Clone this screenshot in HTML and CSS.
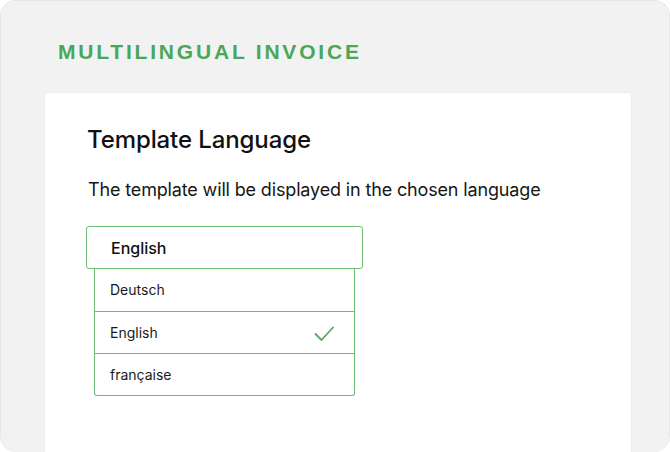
FILE: index.html
```html
<!DOCTYPE html>
<html>
<head>
<meta charset="utf-8">
<link rel="stylesheet" href="styles.css">
</head>
<body>
<div class="frame">
  <h1 class="eyebrow">MULTILINGUAL INVOICE</h1>
  <div class="panel">
    <h2 class="heading">Template Language</h2>
    <p class="desc">The template will be displayed in the chosen language</p>
    <div class="select">
      <div class="select-value">English</div>
      <ul class="menu">
        <li class="option">Deutsch</li>
        <li class="option selected">English
          <svg class="check" width="20" height="16" viewBox="0 0 20 16"><path d="M1.5 8 L7.5 14 L19 1.5" fill="none" stroke="#5aa862" stroke-width="1.8" stroke-linecap="round" stroke-linejoin="round"/></svg>
        </li>
        <li class="option">française</li>
      </ul>
    </div>
  </div>
</div>
</body>
</html>
```
FILE: styles.css
```css
* { box-sizing: border-box; }
html, body { margin: 0; padding: 0; background: #ffffff; }
body { width: 670px; height: 452px; overflow: hidden; font-family: Inter, "Noto Sans", sans-serif; color: #111; }
.frame {
  width: 670px; height: 452px;
  background: #f2f2f2;
  border: 1px solid #e7e7e7;
  border-bottom: none;
  border-radius: 16px 16px 16px 16px;
  padding: 0 38px 0 44px;
  display: flex; flex-direction: column;
  overflow: hidden;
}
.eyebrow {
  margin: 37px 0 0 13px;
  font-family: "Liberation Sans", Arial, sans-serif;
  font-weight: 700;
  font-size: 21px;
  line-height: 28px;
  letter-spacing: 2.8px;
  color: #4aa757;
}
.panel {
  margin-top: 27px;
  flex: 1;
  background: #fff;
  border-radius: 3px 3px 0 0;
  box-shadow: 0 0 2px rgba(0,0,0,0.08);
  padding: 31px 0 0 41px;
}
.heading {
  margin: 0 0 0 1px;
  font-size: 24px;
  font-weight: 500;
  line-height: 32px;
  color: #111;
  letter-spacing: -0.1px;
}
.desc {
  margin: 22px 0 0 2px;
  font-size: 18px;
  line-height: 24px;
  color: #161616;
  letter-spacing: -0.15px;
}
.select { margin-top: 24px; width: 277px; }
.select-value {
  height: 43px;
  border: 1px solid #6dbb74;
  border-radius: 3px;
  padding-left: 24px;
  display: flex; align-items: center;
  font-size: 16px; font-weight: 500;
  color: #111;
}
.menu {
  list-style: none;
  margin: -1px 8px 0 8px;
  padding: 0;
  border: 1px solid #6dbb74;
  border-top: none;
  border-radius: 0 0 3px 3px;
}
.option {
  height: 42px;
  padding: 0 20px 0 15px;
  display: flex; align-items: center; justify-content: space-between;
  font-size: 14px;
  color: #1a1a1a;
  border-top: 1px solid #6dbb74;
}
.option:first-child { border-top: none; height: 43px; }
.check { margin-right: 0; margin-top: 2px; }
```
